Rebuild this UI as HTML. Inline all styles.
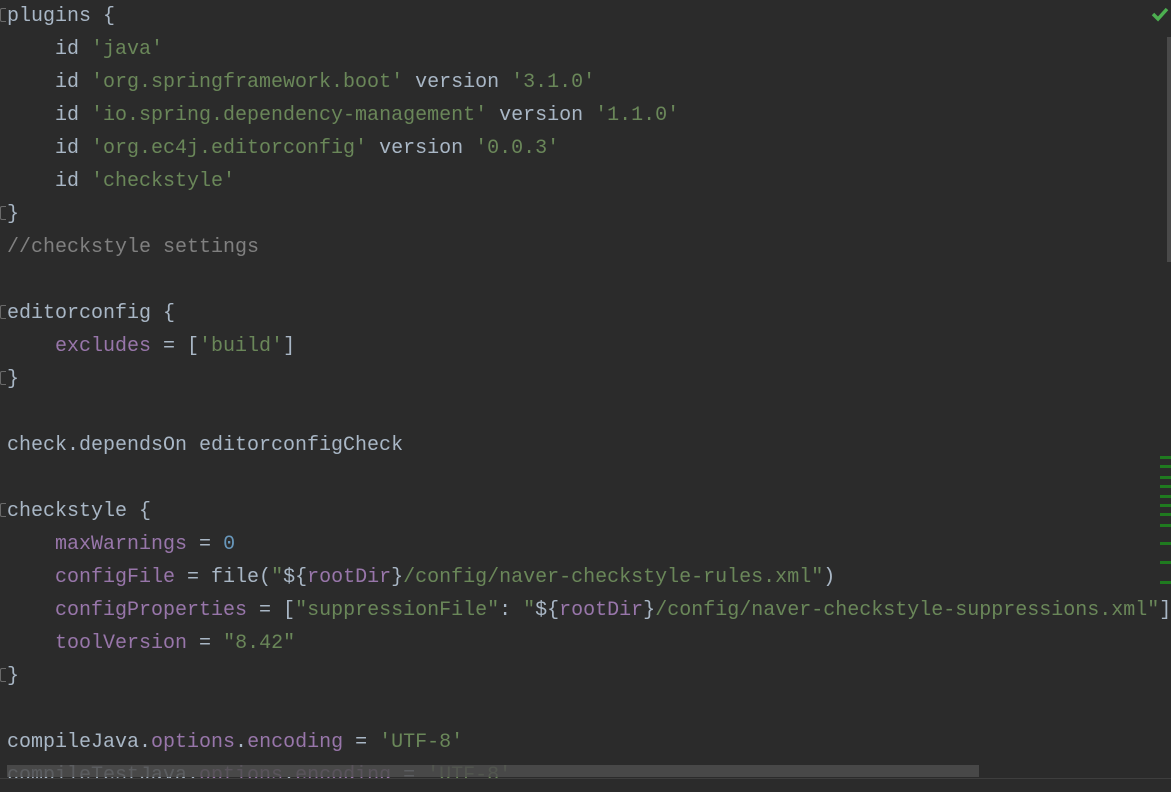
<!DOCTYPE html>
<html><head><meta charset="utf-8"><style>
body{margin:0;width:1171px;height:784px;background:#2b2b2b;overflow:hidden;position:relative}
pre{position:absolute;left:7px;top:0px;margin:0;font-family:"Liberation Mono",monospace;font-size:20px;line-height:33px;color:#a9b7c6;letter-spacing:0}
.s{color:#6a8759}.p{color:#9876aa}.c{color:#808080}.n{color:#6897bb}
.f{position:absolute;left:0;width:5px;height:12px;border:1px solid #6a6a6a;border-right:none;border-radius:2px 0 0 2px}
.g{position:absolute;left:1160px;width:11px;height:3px;background:#1f7a1f}
</style></head><body>
<pre>plugins {
    id <span class="s">'java'</span>
    id <span class="s">'org.springframework.boot'</span> version <span class="s">'3.1.0'</span>
    id <span class="s">'io.spring.dependency-management'</span> version <span class="s">'1.1.0'</span>
    id <span class="s">'org.ec4j.editorconfig'</span> version <span class="s">'0.0.3'</span>
    id <span class="s">'checkstyle'</span>
}
<span class="c">//checkstyle settings</span>

editorconfig {
    <span class="p">excludes</span> = [<span class="s">'build'</span>]
}

check.dependsOn editorconfigCheck

checkstyle {
    <span class="p">maxWarnings</span> = <span class="n">0</span>
    <span class="p">configFile</span> = file(<span class="s">"</span>${<span class="p">rootDir</span>}<span class="s">/config/naver-checkstyle-rules.xml"</span>)
    <span class="p">configProperties</span> = [<span class="s">"suppressionFile"</span>: <span class="s">"</span>${<span class="p">rootDir</span>}<span class="s">/config/naver-checkstyle-suppressions.xml"</span>]
    <span class="p">toolVersion</span> = <span class="s">"8.42"</span>
}

compileJava.<span class="p">options</span>.<span class="p">encoding</span> = <span class="s">'UTF-8'</span>
compileTestJava.<span class="p">options</span>.<span class="p">encoding</span> = <span class="s">'UTF-8'</span></pre>
<div class="f" style="top:8px"></div>
<div class="f" style="top:206px"></div>
<div class="f" style="top:305px"></div>
<div class="f" style="top:371px"></div>
<div class="f" style="top:503px"></div>
<div class="f" style="top:668px"></div>
<svg style="position:absolute;left:1151px;top:6px" width="18" height="16" viewBox="0 0 18 16"><path d="M2 8 L7 13 L16 3" stroke="#4caf50" stroke-width="3.5" fill="none"/></svg>
<div style="position:absolute;left:1167px;top:37px;width:4px;height:225px;background:#4a4a4a"></div>
<div class="g" style="top:456px"></div><div class="g" style="top:465px"></div><div class="g" style="top:476px"></div><div class="g" style="top:485px"></div><div class="g" style="top:495px"></div><div class="g" style="top:504px"></div><div class="g" style="top:513px"></div><div class="g" style="top:524px"></div><div class="g" style="top:542px"></div><div class="g" style="top:561px"></div><div class="g" style="top:581px"></div>
<div style="position:absolute;left:7px;top:765px;width:972px;height:12px;background:#4e4e4e;opacity:.85"></div>
<div style="position:absolute;left:0;top:778px;width:1171px;height:1px;background:#3e3e3e"></div>
<div style="position:absolute;left:0;top:779px;width:1171px;height:5px;background:#2b2b2b"></div>
</body></html>
